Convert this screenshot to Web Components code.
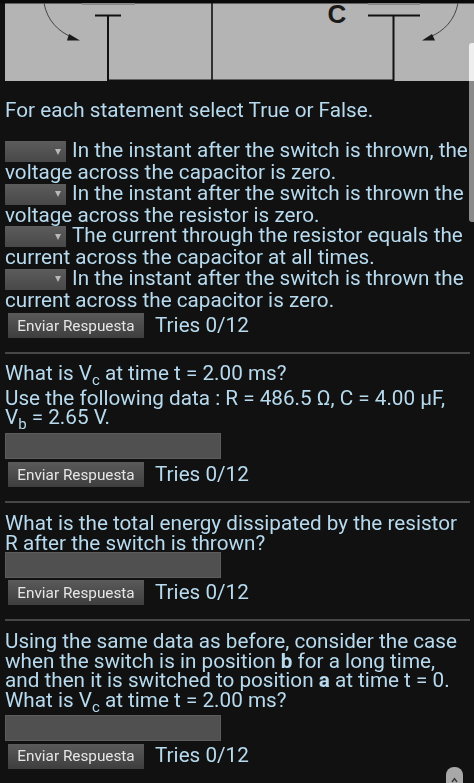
<!DOCTYPE html>
<html>
<head>
<meta charset="utf-8">
<title>Homework</title>
<style>
  html, body { margin: 0; height: 100%; background: #111; overflow: hidden; }
  body { color: #b7daee; font: 20.7px/19.6px Roboto, "Liberation Sans", sans-serif; }
  hw-page { width: 474px; height: 783px; }
</style>
</head>
<body>

<template id="figure-tpl">
  <style>
    :host { display: block; }
    svg { display: block; width: 474px; height: 84px; }
  </style>
  <svg viewBox="0 0 474 84" fill="none">
    <rect width="474" height="84" fill="#111"/>
    <rect y="0" width="474" height="3.5" fill="#0a0a0a"/>
    <rect x="5" y="3.5" width="469" height="77.5" fill="#b4b4b4"/>
    <rect x="82" y="3" width="53" height="2" fill="#8a8a8a"/>
    <rect x="368" y="3" width="52" height="2" fill="#8a8a8a"/>
    <rect x="109" y="79.5" width="285" height="2" fill="#111"/>
    <path d="M95 15.5H121M108 15.5V81" stroke="#111" stroke-width="2"/>
    <path d="M368 15.5H420M393.5 15.5V81" stroke="#111" stroke-width="2"/>
    <path d="M212 3V80" stroke="#111" stroke-width="1.6"/>
    <path d="M44 3C47 20 58 32 74 38" stroke="#444" stroke-width="1"/>
    <path d="M80 40.5L67 40.5L69 34Z" fill="#1a1a1a"/>
    <path d="M458 3C455 20 444 31 430 37" stroke="#444" stroke-width="1"/>
    <path d="M422 40.5L435 40.5L432 34Z" fill="#1a1a1a"/>
    <text x="327.5" y="22.5" font-family="Liberation Sans, sans-serif" font-weight="700" font-size="26" fill="#1a1a1a">C</text>
  </svg>
</template>

<template id="select-tpl">
  <style>
    :host {
      display: inline-flex;
      align-items: center;
      justify-content: flex-end;
      box-sizing: border-box;
      width: 61px;
      height: 21px;
      padding-right: 5px;
      margin: 2px 6px -2px 0;
      vertical-align: top;
      background: linear-gradient(#5c5c5c, #484848);
    }
    i { width: 0; height: 0; border: 3.5px solid transparent; border-top: 6px solid #b9b9b9; border-bottom: 0; }
  </style>
  <i></i>
</template>

<template id="statement-tpl">
  <style>
    :host { display: block; height: 42.5px; line-height: 22px; white-space: nowrap; }
  </style>
  <hw-select></hw-select><slot></slot>
</template>

<template id="submit-tpl">
  <style>
    :host { display: flex; align-items: center; height: 25px; padding-left: 3px; }
    button {
      box-sizing: border-box;
      width: 136px;
      height: 25px;
      padding: 0;
      border: 0;
      margin-right: 11px;
      color: #e6e6e6;
      font: 15.3px Roboto, "Liberation Sans", sans-serif;
      background: linear-gradient(#5a5a5a, #3e3e3e);
    }
    span { color: #b7daee; font-size: 20.7px; }
  </style>
  <button type="button">Enviar Respuesta</button><span>Tries 0/12</span>
</template>

<template id="problem-tpl">
  <style>
    :host { display: block; margin-top: var(--top, 0); }
    .q { display: block; white-space: nowrap; }
    .box { height: 26px; width: 216.5px; margin: var(--gap, 0) 0 var(--after, 3px) -0.5px; background: #505050; border: 1px solid #5c5c5c; box-sizing: border-box; }
    hr { height: 2px; margin: 14px 4px 0 0; border: 0; background: #474747; }
  </style>
  <slot class="q"></slot>
  <div class="box"></div>
  <hw-submit></hw-submit>
  <hr>
</template>

<template id="page-tpl">
  <style>
    :host { display: block; position: relative; overflow: hidden; filter: blur(0.3px); }
    main { padding-left: 5px; }
    p { margin: 16px 0 18px; line-height: 21px; }
    .group hr { height: 2px; margin: 14px 4px 0 0; border: 0; background: #474747; }
    .group hw-submit { margin-top: 4px; }
    sub { font-size: 15px; line-height: 15.7px; vertical-align: -5px; }
    .bar { position: absolute; top: 43px; right: 0; width: 5px; height: 179px; border-radius: 3px 0 0 3px; background: linear-gradient(#eee 38px, #8a8a8a 38px); }
    .up { position: absolute; right: 11px; bottom: 0; width: 17px; height: 16px; border-radius: 8px 8px 0 0; background: #a8a8a8; }
    .up svg { display: block; margin: 10px auto 0; }
  </style>
  <hw-figure></hw-figure>
  <main>
    <p>For each statement select True or False.</p>
    <div class="group">
      <hw-statement>In the instant after the switch is thrown, the<br>voltage across the capacitor is zero.</hw-statement>
      <hw-statement>In the instant after the switch is thrown the<br>voltage across the resistor is zero.</hw-statement>
      <hw-statement>The current through the resistor equals the<br>current across the capacitor at all times.</hw-statement>
      <hw-statement>In the instant after the switch is thrown the<br>current across the capacitor is zero.</hw-statement>
      <hw-submit></hw-submit>
      <hr>
    </div>
    <hw-problem style="--top:10px">What is V<sub>c</sub> at time t = 2.00 ms?<br>Use the following data : R = 486.5 Ω, C = 4.00 µF,<br>V<sub>b</sub> = 2.65 V.</hw-problem>
    <hw-problem style="--top:11px;--gap:-1px;--after:2px">What is the total energy dissipated by the resistor<br>R after the switch is thrown?</hw-problem>
    <hw-problem style="--top:11px;--gap:-1px">Using the same data as before, consider the case<br>when the switch is in position <b>b</b> for a long time,<br>and then it is switched to position <b>a</b> at time t = 0.<br>What is V<sub>c</sub> at time t = 2.00 ms?</hw-problem>
  </main>
  <div class="bar"></div>
  <div class="up"><svg width="7" height="6" viewBox="0 0 7 6" fill="none"><path d="M1 5L3.5 1.5L6 5" stroke="#333" stroke-width="1.3"/></svg></div>
</template>

<hw-page></hw-page>

<script>
  function define(name, tpl) {
    customElements.define(name, class extends HTMLElement {
      constructor() {
        super();
        this.attachShadow({ mode: "open" });
        this.shadowRoot.appendChild(document.getElementById(tpl).content.cloneNode(true));
      }
    });
  }

  define("hw-figure", "figure-tpl");
  define("hw-select", "select-tpl");
  define("hw-statement", "statement-tpl");
  define("hw-submit", "submit-tpl");
  define("hw-problem", "problem-tpl");
  define("hw-page", "page-tpl");
</script>
</body>
</html>
